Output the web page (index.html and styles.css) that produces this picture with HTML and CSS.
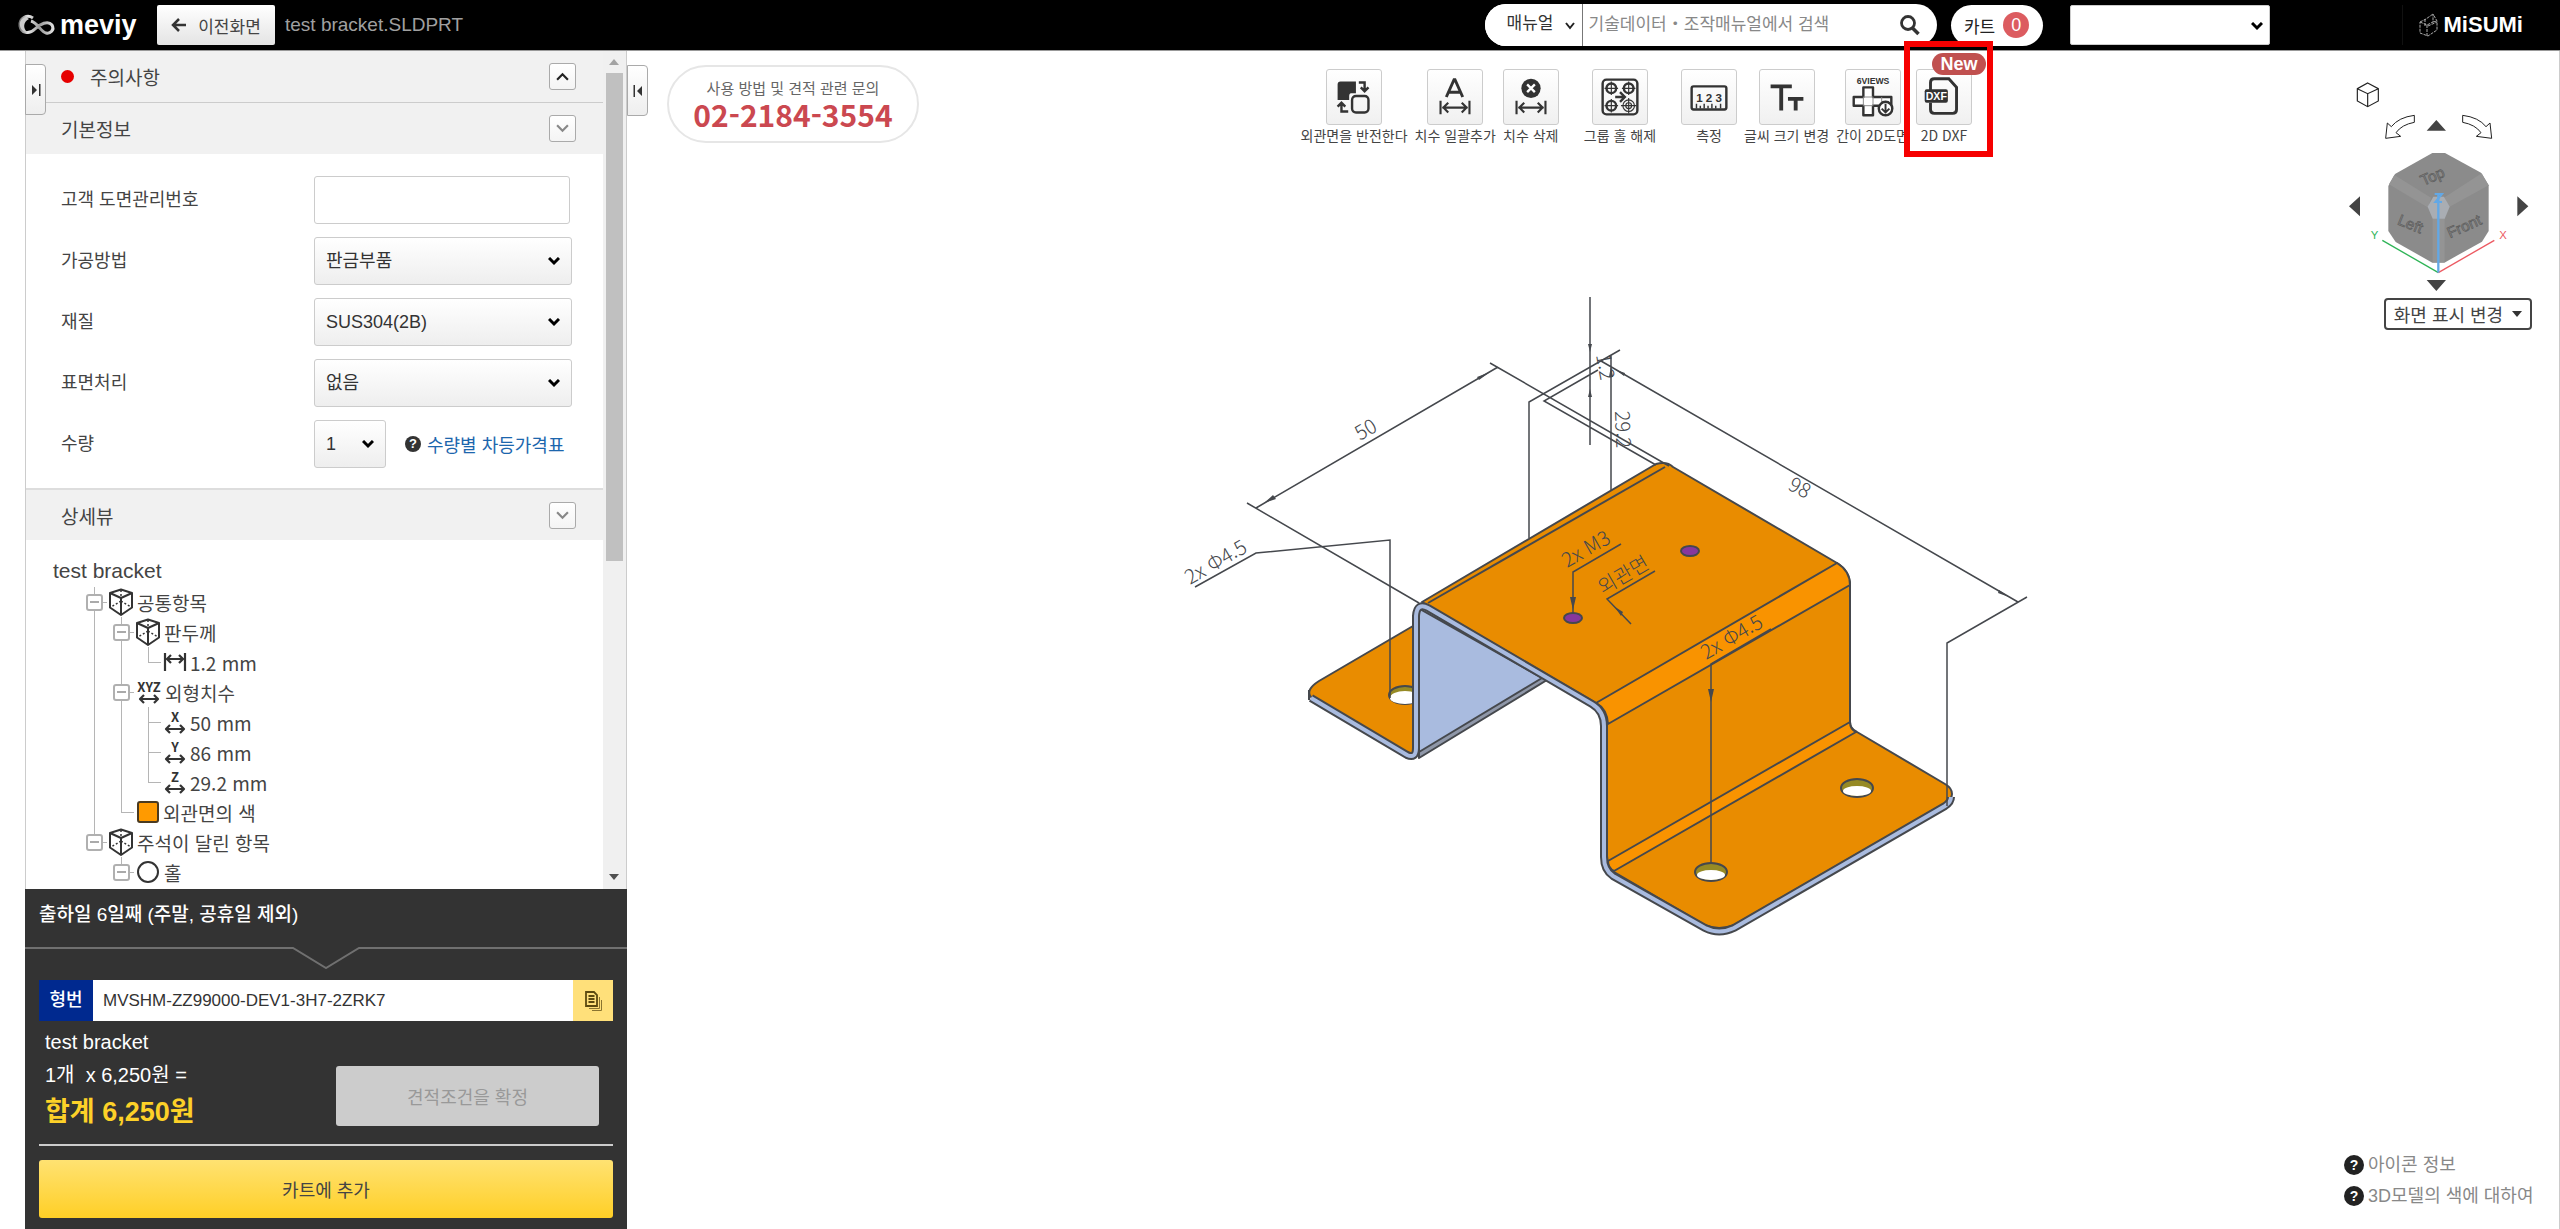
FILE: index.html
```html
<!DOCTYPE html>
<html lang="ko">
<head>
<meta charset="utf-8">
<title>meviy - test bracket.SLDPRT</title>
<link rel="stylesheet" href="styles.css">
</head>
<body>
<svg class="defs" aria-hidden="true">
  <defs>
    <symbol id="cube" viewBox="0 0 26 28">
      <path d="M13 1.500L24 5v14.500L13 27 2 19.500V5z M2 5l11 5 11-5 M13 10v17" fill="none" stroke="#333" stroke-width="2" stroke-linejoin="round"/>
      <path d="M13 2v11M13 13L3 19M13 13l10 6" fill="none" stroke="#333" stroke-width="1.500" stroke-dasharray="2 2"/>
    </symbol>
    <symbol id="span" viewBox="0 0 24 10">
      <path d="M3 5h18M7 1L3 5l4 4M17 1l4 4-4 4" fill="none" stroke="#333" stroke-width="2.200" stroke-linejoin="round"/>
    </symbol>
    <symbol id="dim" viewBox="0 0 34 16">
      <path d="M2 1v14M32 1v14M4 8h26M10 3L5 8l5 5M24 3l5 5-5 5" fill="none" stroke="#333" stroke-width="2.200"/>
    </symbol>
    <symbol id="up" viewBox="0 0 12 8"><path d="M1 7l5-5 5 5" fill="none" stroke="currentColor" stroke-width="2"/></symbol>
    <symbol id="down" viewBox="0 0 12 8"><path d="M1 1l5 5 5-5" fill="none" stroke="currentColor" stroke-width="2"/></symbol>
  </defs>
</svg>

<header class="topbar">
  <a class="logo" href="#">
    <svg width="39" height="24" viewBox="0 0 39 24" aria-hidden="true">
      <defs><linearGradient id="lg" x1="0" x2="1"><stop offset="0" stop-color="#777"/><stop offset=".25" stop-color="#e6e6e6"/><stop offset=".6" stop-color="#999"/><stop offset="1" stop-color="#ddd"/></linearGradient></defs>
      <path d="M16 5C10 1 2 5 3 13c1 7 9 9 15 3 5-5 13-9 17-4 3 5-2 9-6 8-5-1-8-10-15-12" fill="none" stroke="url(#lg)" stroke-width="3"/>
      <path d="M9 4C4 5 2 9 3 13c1 4 4 6 7 6C6 15 6 9 12 6z" fill="#ccc"/>
    </svg>
    <span>meviy</span>
  </a>
  <button class="back" type="button">
    <svg width="16" height="14" viewBox="0 0 16 14" aria-hidden="true"><path d="M8 1L2 7l6 6M2 7h13" fill="none" stroke="#333" stroke-width="2.500"/></svg>
    이전화면
  </button>
  <span class="filename">test bracket.SLDPRT</span>
  <form class="search">
    <select aria-label="검색 대상"><option>매뉴얼</option></select>
    <input type="text" aria-label="검색어" placeholder="기술데이터・조작매뉴얼에서 검색">
    <button type="button" aria-label="검색"><svg width="22" height="22" viewBox="0 0 22 22"><circle cx="9" cy="9" r="6.500" fill="none" stroke="#333" stroke-width="2.800"/><path d="M13.500 14l6 6" stroke="#333" stroke-width="3.500"/></svg></button>
  </form>
  <button class="cart" type="button">카트 <span class="count">0</span></button>
  <select class="account" aria-label="계정"><option></option></select>
  <div class="misumi">
    <svg width="20" height="24" viewBox="0 0 20 24" aria-hidden="true"><path d="M1 9l7 3 6-3V1l4 7v9l-9 6-8-3zM8 12v11M1 9l6-3 7-5M6 6v8M14 9l4-1M9 13l9-4" fill="none" stroke="#aaa" stroke-width="1" stroke-dasharray="3 1"/></svg>
    <span>MiSUMi</span>
  </div>
</header>

<main class="workspace">
  <aside class="panel">
    <button class="tab tab-left" type="button" aria-label="패널 넓히기"><svg width="10" height="12" viewBox="0 0 10 12"><path d="M1 1l5 5-5 5zM8 0h1.500v12H8z" fill="#333"/></svg></button>
    <div class="scroll">
      <div class="scroll-body">
        <section class="head head-line">
          <h2><i class="dot"></i>주의사항</h2>
          <button class="fold" type="button" aria-label="펼치기"><svg width="13" height="9"><use href="#up"/></svg></button>
        </section>
        <section class="head">
          <h2>기본정보</h2>
          <button class="fold soft" type="button" aria-label="접기"><svg width="13" height="9"><use href="#down"/></svg></button>
        </section>
        <form class="fields">
          <label for="num">고객 도면관리번호</label>
          <input id="num" type="text">
          <label for="proc">가공방법</label>
          <select id="proc"><option>판금부품</option></select>
          <label for="mat">재질</label>
          <select id="mat"><option>SUS304(2B)</option></select>
          <label for="surf">표면처리</label>
          <select id="surf"><option>없음</option></select>
          <label for="qty">수량</label>
          <div class="qty">
            <select id="qty"><option>1</option></select>
            <a href="#"><span class="help">?</span>수량별 차등가격표</a>
          </div>
        </form>
        <section class="head head-top">
          <h2>상세뷰</h2>
          <button class="fold soft" type="button" aria-label="접기"><svg width="13" height="9"><use href="#down"/></svg></button>
        </section>
        <div class="tree">
          <h3>test bracket</h3>
          <ul>
            <li>
              <div class="row"><button type="button" class="toggle" aria-label="접기"></button><svg class="ic" width="26" height="28"><use href="#cube"/></svg>공통항목</div>
              <ul>
                <li>
                  <div class="row"><button type="button" class="toggle" aria-label="접기"></button><svg class="ic" width="26" height="28"><use href="#cube"/></svg>판두께</div>
                  <ul>
                    <li><div class="row leaf"><svg class="ic" width="24" height="20" viewBox="0 0 24 20"><path d="M2 1v18M22 1v18M4 7h16M8 3L4 7l4 4M16 3l4 4-4 4" fill="none" stroke="#333" stroke-width="2.200"/></svg>1.2 mm</div></li>
                  </ul>
                </li>
                <li>
                  <div class="row"><button type="button" class="toggle" aria-label="접기"></button><span class="ic axis wide"><b>XYZ</b><svg width="24" height="10"><use href="#span"/></svg></span>외형치수</div>
                  <ul>
                    <li><div class="row leaf"><span class="ic axis"><b>X</b><svg width="24" height="10"><use href="#span"/></svg></span>50 mm</div></li>
                    <li><div class="row leaf"><span class="ic axis"><b>Y</b><svg width="24" height="10"><use href="#span"/></svg></span>86 mm</div></li>
                    <li><div class="row leaf"><span class="ic axis"><b>Z</b><svg width="24" height="10"><use href="#span"/></svg></span>29.2 mm</div></li>
                  </ul>
                </li>
                <li><div class="row leaf"><svg class="ic" width="24" height="24" viewBox="0 0 24 24"><rect x="2" y="2" width="20" height="20" rx="2" fill="#ff9a00" stroke="#4a3a20" stroke-width="2"/></svg>외관면의 색</div></li>
              </ul>
            </li>
            <li>
              <div class="row"><button type="button" class="toggle" aria-label="접기"></button><svg class="ic" width="26" height="28"><use href="#cube"/></svg>주석이 달린 항목</div>
              <ul>
                <li><div class="row"><button type="button" class="toggle" aria-label="접기"></button><svg class="ic" width="26" height="24" viewBox="0 0 26 24"><circle cx="13" cy="12" r="10" fill="#fff" stroke="#333" stroke-width="2"/></svg>홀</div></li>
              </ul>
            </li>
          </ul>
        </div>
      </div>
      <div class="bar" aria-hidden="true">
        <svg width="22" height="22" viewBox="0 0 22 22"><path d="M6 14l5-6 5 6z" fill="#a3a3a3"/></svg>
        <div class="thumb"></div>
        <svg class="bar-end" width="22" height="22" viewBox="0 0 22 22"><path d="M6 7l5 6 5-6z" fill="#505050"/></svg>
      </div>
    </div>

    <div class="quote">
      <p class="ship">출하일 6일째 (주말, 공휴일 제외)</p>
      <div class="notch"><i></i><svg width="68" height="22" viewBox="0 0 68 22" aria-hidden="true"><path d="M0 1h1l33 20L67 1h1" fill="none" stroke="#707070" stroke-width="2"/></svg><i></i></div>
      <div class="code">
        <label for="pn">형번</label>
        <input id="pn" type="text" value="MVSHM-ZZ99000-DEV1-3H7-2ZRK7">
        <button type="button" aria-label="복사"><svg width="18" height="20" viewBox="0 0 18 20"><path d="M2 1h8l3 3v11H2zM4.500 5h6M4.500 8h6M4.500 11h6" fill="none" stroke="#5c4a10" stroke-width="1.800"/><path d="M5 17.500h10.500V6M8 19.500h9.500V9" fill="none" stroke="#8a7430" stroke-width="1"/></svg></button>
      </div>
      <div class="sum">
        <div>
          <p class="name">test bracket</p>
          <p class="unit">1개&nbsp; x 6,250원 =</p>
          <p class="total">합계 6,250원</p>
        </div>
        <button class="fix" type="button" disabled>견적조건을 확정</button>
      </div>
      <button class="add" type="button">카트에 추가</button>
    </div>
  </aside>

  <section class="viewer">
    <svg class="model" width="880" height="650" viewBox="1152 290 880 650" role="img" aria-label="test bracket">
      <g class="edge">
        <path d="M1412 626L1318 681Q1304 690 1310 697L1408 754H1414z" fill="#e98c00"/>
        <ellipse cx="1404" cy="695" rx="16" ry="9" fill="#968a25"/>
        <path d="M1389 698a15 7 0 0 1 30 0a15 6 0 0 1-30 0z" fill="#fff" stroke="none"/>
        <path d="M1308 690v10" fill="none"/>
        <path d="M1417 608L1546 680L1418 758z" fill="#8f97a8"/>
        <path d="M1417 608L1541 678L1418 752z" fill="#a9bbdf"/>
        <path d="M1421 602L1655 464Q1666 461 1672 467L1836 563Q1849 571 1849 585V722Q1849 729 1856 732L1944 784Q1951 788 1951 794Q1951 799 1944 803L1733 925Q1718 931 1704 925L1613 872Q1606 866 1606 856V724Q1606 709 1595 703z" fill="#e98c00"/>
      </g>
      <g class="edge">
        <path d="M1595 703L1836 563Q1849 571 1849 585L1607 724Q1606 709 1595 703z" fill="#f99300"/>
        <path d="M1607 861L1849 722Q1849 729 1855 732L1613 871Q1607 868 1607 861z" fill="#f99300"/>
        <path d="M1427 603L1664 467" fill="none"/>
      </g>
      <path id="rim" d="M1310 698L1406 755Q1415 759 1415 748V616Q1416 602 1427 608L1591 704Q1603 711 1603 726V857Q1603 870 1612 876L1704 928Q1718 935 1733 928L1944 806Q1950 802 1950 797" fill="none" stroke="#45484d" stroke-width="8"/>
      <path d="M1310 698L1406 755Q1415 759 1415 748V616Q1416 602 1427 608L1591 704Q1603 711 1603 726V857Q1603 870 1612 876L1704 928Q1718 935 1733 928L1944 806Q1950 802 1950 797" fill="none" stroke="#a9bbdf" stroke-width="4"/>
      <g stroke="#45484d" stroke-width="2">
        <ellipse cx="1572" cy="618" rx="9" ry="5" fill="#87379c"/>
        <ellipse cx="1689" cy="551" rx="9" ry="5" fill="#87379c"/>
        <ellipse cx="1856" cy="788" rx="16" ry="9" fill="#968a25"/>
        <ellipse cx="1710" cy="872" rx="16" ry="9" fill="#968a25"/>
      </g>
      <ellipse cx="1856" cy="791" rx="14" ry="5" fill="#fff"/>
      <ellipse cx="1710" cy="875" rx="14" ry="5" fill="#fff"/>
      <g fill="none" stroke="#45484d" stroke-width="1.500">
        <path d="M1589 297V445M1255 508L1497 367M1246 503L1418 603M1489 363L1668 466M1597 370L1543 401L1655 465"/>
        <path d="M1619 350L1528 402V538M1610 355V491M1600 361L2017 602M2026 597L1946 643V806"/>
        <path d="M1194 587L1255 553L1389 540V698"/>
        <path d="M1620 544L1572 572V613M1654 571L1606 599L1630 624M1770 629L1710 664V863"/>
      </g>
      <path d="M1589 352l-2-8h4zM1589 389l-2 8h4zM1489 372l-11 8-2-3zM1263 503l9-8 3 4zM1610 366l-2 11h4zM1615 370l9 3-1 3zM2008 597l-11-4 1-3zM1572 610l-3-13h6zM1614 607l8 5-2 4zM1710 702l-3-13h6z" fill="#45484d"/>
      <g class="note">
        <text transform="translate(1189 585) rotate(-30)">2x Φ4.5</text>
        <text transform="translate(1359 441) rotate(-30)">50</text>
        <text transform="translate(1786 489) rotate(28)">98</text>
        <text transform="translate(1595 355) rotate(80)">1.2</text>
        <text transform="translate(1614 411) rotate(88)">29.2</text>
        <text transform="translate(1566 568) rotate(-30)">2x M3</text>
        <text transform="translate(1602 595) rotate(-30)">외관면</text>
        <text transform="translate(1705 660) rotate(-30)">2x Φ4.5</text>
      </g>
    </svg>

    <div class="overlay">
      <button class="tab tab-right" type="button" aria-label="패널 접기"><svg width="10" height="12" viewBox="0 0 10 12"><path d="M9 1L4 6l5 5zM.5 0H2v12H.500z" fill="#333"/></svg></button>
      <div class="contact"><span>사용 방법 및 견적 관련 문의</span><strong>02-2184-3554</strong></div>
      <nav class="tools">
        <div class="tool"><button type="button" id="t1"><svg viewBox="0 0 56 56"><path d="M14 12h16v12h-5q-2 0-2 3v4H11V15q0-3 3-3z" fill="#333"/><rect x="26" y="27" width="17" height="17" rx="4" fill="none" stroke="#333" stroke-width="2.500"/><path d="M33 13h6v7M35 18l4 4 4-4M22 43h-7v-7M11 38l4-4 4 4" fill="none" stroke="#333" stroke-width="2.500"/></svg></button><label for="t1">외관면을 반전한다</label></div>
        <div class="tool"><button type="button" id="t2"><svg viewBox="0 0 56 56"><path d="M19 28l8-18h1l8 18M22 23h11" fill="none" stroke="#333" stroke-width="3"/><svg x="11" y="31" width="34" height="16"><use href="#dim"/></svg></svg></button><label for="t2">치수 일괄추가</label></div>
        <div class="tool"><button type="button" id="t3"><svg viewBox="0 0 56 56"><circle cx="28" cy="19" r="10" fill="#333"/><path d="M24 15l8 8M32 15l-8 8" stroke="#fff" stroke-width="2.500"/><svg x="11" y="31" width="34" height="16"><use href="#dim"/></svg></svg></button><label for="t3">치수 삭제</label></div>
        <div class="tool solo"><button type="button" id="t4"><svg viewBox="0 0 56 56"><g fill="none" stroke="#333" stroke-width="2.500"><rect x="10" y="10" width="36" height="36" rx="4"/><circle cx="19" cy="19" r="5"/><circle cx="37" cy="19" r="5"/><circle cx="19" cy="37" r="5"/></g><g fill="none" stroke="#333" stroke-width="1.200"><path d="M19 12v14M12 19h14M37 12v14M30 19h14M19 30v14M12 37h14M37 29v16M29 37h16"/><circle cx="37" cy="37" r="6"/><circle cx="37" cy="37" r="3"/></g><path d="M23 28h9M28 23l5 5-5 5" fill="none" stroke="#333" stroke-width="2.500"/></svg></button><label for="t4">그룹 홀 해제</label></div>
        <div class="tool"><button type="button" id="t5"><svg viewBox="0 0 56 56"><rect x="10" y="17" width="36" height="24" rx="2" fill="none" stroke="#333" stroke-width="2.500"/><path d="M15 40v-5M19 40v-3M23 40v-5M27 40v-3M31 40v-5M35 40v-3M40 40v-5" stroke="#333" stroke-width="1.500"/><text x="28" y="33" text-anchor="middle" class="t12">1 2 3</text></svg></button><label for="t5">측정</label></div>
        <div class="tool"><button type="button" id="t6"><svg viewBox="0 0 56 56"><path d="M11 17h22M22 17v25M29 30h16M37 30v12" stroke="#333" stroke-width="4" fill="none"/></svg></button><label for="t6">글씨 크기 변경</label></div>
        <div class="tool"><button type="button" id="t7"><svg viewBox="0 0 56 56"><text x="28" y="15" text-anchor="middle" class="t9">6VIEWS</text><path d="M18 18h10v10h19v9H28v10H18V37H8v-9h10z" fill="#fff" stroke="#333" stroke-width="2.500" stroke-linejoin="round"/><path d="M18 28h10v9H18zM37 28v9" fill="none" stroke="#888"/><circle cx="41" cy="40" r="7" fill="#fff" stroke="#333" stroke-width="2.500"/><path d="M41 35v9M37 40l4 4 4-4" fill="none" stroke="#333" stroke-width="2"/></svg></button><label for="t7">간이 2D도면</label></div>
        <div class="tool framed"><button type="button" id="t8"><svg viewBox="0 0 56 56"><path d="M14 21V13q0-4 4-4h15l8 9v23q0 4-4 4H18q-4 0-4-4v-7" fill="none" stroke="#333" stroke-width="3"/><rect x="8" y="20" width="24" height="14" rx="2" fill="#333"/><text x="20" y="31" text-anchor="middle" class="t10">DXF</text></svg></button><label for="t8">2D DXF</label><span class="new">New</span></div>
      </nav>
      <div class="orient">
        <svg width="184" height="212" viewBox="144 240 552 636" role="img" aria-label="시점 큐브">
          <path d="M203 249l32 17v37l-32 17-31-17v-37zM172 266l31 15 32-15M203 281v38" fill="none" stroke="#222" stroke-width="3.500"/>
          <path d="M343 346v21q-38 7-55 31l14 11-45 6 5-46 12 11q22-28 69-34z" fill="#fff" stroke="#222" stroke-width="3"/>
          <path d="M488 346v21q38 7 55 31l-14 11 46 6-5-46-12 11q-22-28-70-34z" fill="#fff" stroke="#222" stroke-width="3"/>
          <path d="M409 360l29 32h-58zM409 873l29-33h-58zM147 619l33-30v60zM685 619l-33-30v60z" fill="#444"/>
          <path d="M397 459h38l108 59 23 38v137l-20 32-113 63h-36l-110-62-22-33V558l20-36z" fill="#8b8b8b"/>
          <path d="M283 525l110 68-8 30-118-70zM545 520l21 36-124 68-8-32zM398 655h36v132h-36z" fill="#949494"/>
          <path d="M400 590h32l17 30-15 36h-36l-15-36z" fill="#a9adb3"/>
          <path d="M415 818L247 721" stroke="#2fb457" stroke-width="4"/><path d="M415 818l168-97" stroke="#ec5a62" stroke-width="4"/><path d="M415 818V585" stroke="#62a8e6" stroke-width="7"/><path d="M404 582h22l-20 24h20" fill="none" stroke="#62a8e6" stroke-width="6"/>
          <g class="faces"><text transform="translate(370 558) rotate(-24)">Top</text><text transform="translate(290 672) rotate(22)">Left</text><text transform="translate(450 715) rotate(-24)">Front</text></g>
          <text x="212" y="718" class="ax" fill="#2fb457">Y</text><text x="598" y="718" class="ax" fill="#ec5a62">X</text>
        </svg>
        <button class="view" type="button">화면 표시 변경<svg width="10" height="6" viewBox="0 0 10 6" aria-hidden="true"><path d="M0 0h10L5 6z" fill="#333"/></svg></button>
      </div>
      <div class="links">
        <a href="#"><span class="help">?</span>아이콘 정보</a>
        <a href="#"><span class="help">?</span>3D모델의 색에 대하여</a>
      </div>
    </div>
  </section>
</main>
</body>
</html>
```

FILE: styles.css
```css
*, *::before, *::after { box-sizing: border-box; }
body {
  margin: 0;
  height: 100vh;
  display: flex;
  flex-direction: column;
  overflow: hidden;
  font-family: "Liberation Sans", "Noto Sans CJK KR", sans-serif;
  font-size: 18px;
  color: #444;
  background: #fff;
}
h2, h3, p, ul { margin: 0; padding: 0; font-weight: 400; }
ul { list-style: none; }
button, input, select { font: inherit; color: inherit; margin: 0; }
button { padding: 0; border: 0; background: none; cursor: pointer; }
a { text-decoration: none; color: inherit; }
svg { display: block; flex: none; }
.defs { position: absolute; width: 0; height: 0; }

/* top bar */
.topbar {
  flex: none;
  height: 51px;
  display: flex;
  align-items: center;
  padding: 0 37px 0 17px;
  background: #000;
  border-bottom: 1px solid #999;
}
.logo { display: flex; align-items: center; gap: 4px; width: 140px; color: #fff; font-size: 27px; font-weight: 700; }
.back {
  display: flex; align-items: center; justify-content: center; gap: 11px;
  width: 118px; height: 40px;
  font-size: 17px; color: #444;
  background: linear-gradient(#fff, #e4e4e4);
  border-radius: 2px;
}
.filename { margin-left: 10px; font-size: 19px; color: #a0a0a0; white-space: nowrap; }
.search {
  display: flex; align-items: center;
  width: 452px; height: 42px;
  margin-left: auto;
  background: #fff;
  border-radius: 21px;
  overflow: hidden;
}
.search select, .fields select, .account {
  appearance: none;
  background-repeat: no-repeat;
}
.search select {
  width: 98px; height: 42px;
  padding: 0 0 3px 22px;
  border: 0; border-right: 1px solid #777;
  font-size: 17px; color: #333;
  background-color: #fff;
  background-image: url("data:image/svg+xml,%3Csvg xmlns='http://www.w3.org/2000/svg' width='10' height='8'%3E%3Cpath d='M1 1l4 5 4-5' fill='none' stroke='%23222' stroke-width='2'/%3E%3C/svg%3E");
  background-position: 80px 18px;
}
.search input { flex: 1; min-width: 0; height: 40px; padding: 0 0 1px 6px; border: 0; outline: 0; font-size: 17px; background: none; }
.search input::placeholder { color: #888; opacity: 1; }
.search button { width: 56px; padding-left: 2px; display: flex; justify-content: center; }
.cart {
  display: flex; align-items: center; justify-content: center; gap: 8px;
  width: 92px; height: 41px; margin-left: 14px;
  border-radius: 21px; background: #fff; color: #222; font-size: 17px;
}
.count { width: 26px; height: 26px; border-radius: 50%; background: #dc5c60; color: #fff; line-height: 26px; font-size: 18px; }
.account {
  width: 200px; height: 40px; margin-left: 27px;
  border: 1px solid #ccc; border-radius: 2px;
  background-color: #fff;
  background-image: url("data:image/svg+xml,%3Csvg xmlns='http://www.w3.org/2000/svg' width='12' height='9'%3E%3Cpath d='M1 1l5 5 5-5' fill='none' stroke='%23000' stroke-width='3'/%3E%3C/svg%3E");
  background-position: 180px 16px;
}
.misumi {
  display: flex; align-items: center; gap: 5px;
  height: 40px; margin-left: 132px; padding-left: 16px;
  border-left: 1px solid #111;
  color: #fff; font-size: 22px; font-weight: 700;
}

/* two columns */
.workspace { flex: 1; min-height: 0; display: flex; padding-left: 25px; }
.panel {
  position: relative;
  flex: none; width: 602px;
  display: flex; flex-direction: column;
  border: solid #ccc; border-width: 0 1px;
}
.tab {
  position: absolute; z-index: 2;
  display: flex; align-items: center; justify-content: center;
  width: 21px; height: 51px;
  border: 1px solid #aaa;
  background: linear-gradient(#fff, #eee);
}
.tab-left { left: -1px; top: 13px; border-radius: 0 4px 4px 0; }
.tab-right { left: 0; top: 14px; border-radius: 0 4px 4px 0; }
.scroll { flex: 1; min-height: 0; display: flex; overflow: hidden; }
.scroll-body { flex: 1; overflow: hidden; }
.bar { width: 23px; display: flex; flex-direction: column; background: #f0f0f0; }
.thumb { width: 17px; height: 488px; margin-left: 3px; background: #c0c0c0; }
.bar-end { margin-top: auto; }
.head {
  display: flex; align-items: center; justify-content: space-between;
  height: 51px; padding: 0 27px 0 35px;
  background: #f1f1f1;
}
.head-line { height: 52px; border-bottom: 1px solid #ccc; }
.head-top { height: 52px; border-top: 2px solid #ddd; }
.head h2 { display: flex; align-items: center; gap: 16px; font-size: 19px; }
.dot { width: 13px; height: 13px; border-radius: 50%; background: #e60000; }
.fold {
  display: flex; align-items: center; justify-content: center;
  width: 27px; height: 27px;
  border: 1px solid #aaa; border-radius: 3px;
  background: linear-gradient(#fff, #f4f4f4); color: #222;
}
.soft { color: #888; }

.fields {
  display: grid;
  grid-template-columns: 253px 258px;
  grid-auto-rows: 48px;
  row-gap: 13px;
  align-items: center;
  padding: 22px 0 20px 35px;
}
.fields label { padding-bottom: 4px; }
.fields input, .fields select { height: 48px; border: 1px solid #ccc; border-radius: 3px; }
.fields input { width: 256px; padding: 0 12px; }
.fields select {
  width: 100%;
  padding: 0 11px 1px;
  color: #333;
  background-color: #f6f6f6;
  background-image: url("data:image/svg+xml,%3Csvg xmlns='http://www.w3.org/2000/svg' width='12' height='9'%3E%3Cpath d='M1 1l5 5 5-5' fill='none' stroke='%23000' stroke-width='3'/%3E%3C/svg%3E"), linear-gradient(#fff, #eee);
  background-repeat: no-repeat;
  background-position: right 11px center, 0 0;
}
.qty { display: flex; align-items: center; gap: 19px; white-space: nowrap; }
.qty select { width: 72px; flex: none; }
.qty a { display: flex; align-items: center; gap: 6px; color: #1c66ad; }
.help {
  flex: none;
  width: 16px; height: 16px; border-radius: 50%;
  background: #333; color: #fff;
  font-size: 13px; font-weight: 700; line-height: 16px; text-align: center;
}

/* feature tree */
.tree { padding: 14px 0 0 27px; font-size: 19px; font-family: "Noto Sans CJK KR", sans-serif; }
.tree h3 { font-family: "Liberation Sans", sans-serif; font-size: 21px; line-height: 33px; }
.tree > ul { margin-left: 33px; }
.tree ul ul { margin-left: 27px; }
.tree li { position: relative; }
.tree li::before, .tree li::after { content: ""; position: absolute; left: 8px; background: #b5b5b5; }
.tree li::before { width: 1px; top: 0; bottom: 0; }
.tree li:last-child::before { bottom: auto; height: 15px; }
.tree li::after { height: 1px; width: 13px; top: 15px; }
.row { position: relative; z-index: 1; display: flex; align-items: center; height: 30px; white-space: nowrap; }
.leaf { padding-left: 23px; }
.ic { margin-right: 3px; }
.toggle {
  flex: none; width: 17px; height: 17px; margin-right: 5px;
  border: 2px solid #b0b0b0; border-radius: 3px;
  background: linear-gradient(#aaa, #aaa) center / 9px 2px no-repeat #fff;
}
.axis { display: flex; flex-direction: column; align-items: center; width: 24px; }
.axis b { font-size: 13px; line-height: 14px; color: #333; }
.wide { margin: 0 4px 0 2px; }

/* quotation */
.quote {
  flex: none;
  margin: 0 -1px;
  display: flex; flex-direction: column;
  padding: 0 14px 11px;
  background: #333; color: #fff;
}
.ship { line-height: 52px; height: 58px; font-size: 19px; font-weight: 500; }
.notch { display: flex; margin: 0 -14px 11px; }
.notch i { flex: 1; border-top: 2px solid #707070; }
.code { display: flex; height: 41px; }
.code label { width: 54px; line-height: 40px; text-align: center; font-weight: 500; background: #00298f; }
.code input { flex: 1; min-width: 0; padding: 0 10px; border: 0; background: #fff; color: #333; font-size: 17px; }
.code button { width: 40px; display: flex; align-items: center; justify-content: center; background: #ffe07a; }
.sum {
  display: flex; justify-content: space-between; align-items: flex-start;
  height: 125px; padding: 5px 14px 0 6px; margin-bottom: 14px;
  border-bottom: 2px solid #ccc;
}
.sum p { white-space: nowrap; line-height: 33px; }
.name, .unit { font-size: 20px; }
.sum .total { font-size: 27px; line-height: 40px; font-weight: 700; color: #fdd128; }
.fix { width: 263px; height: 60px; margin-top: 40px; border-radius: 3px; background: #ccc; color: #999; }
.add { height: 58px; border-radius: 3px; background: linear-gradient(#ffe272, #ffcf26); color: #444; }

/* viewer */
.viewer { flex: 1; min-width: 0; display: grid; border-right: 1px solid #ccc; }
.model { grid-area: 1 / 1; justify-self: center; margin-top: 239px; }
.edge { stroke: #45484d; stroke-width: 2; stroke-linejoin: round; }
.note { font-family: "Noto Sans CJK KR", sans-serif; font-weight: 300; font-size: 20px; fill: #45484d; }
.overlay {
  grid-area: 1 / 1;
  position: relative;
  display: grid;
  grid-template-columns: auto 1fr auto;
  grid-template-rows: auto 1fr;
  padding: 14px 21px 19px 40px;
}
.contact {
  display: flex; flex-direction: column; align-items: center; justify-content: center;
  width: 252px; height: 78px;
  border: 2px solid #e6e6e6; border-radius: 39px;
  font-family: "Noto Sans CJK KR", sans-serif;
}
.contact span { font-size: 15px; line-height: 20px; color: #666; }
.contact strong { font-size: 30px; line-height: 32px; color: #cb4850; }
.tools { display: flex; align-items: flex-start; justify-self: end; gap: 7px; padding: 4px 376px 0 0; }
.tool { position: relative; display: flex; flex-direction: column; align-items: center; min-width: 56px; }
.tool button { width: 56px; height: 56px; border: 1px solid #ccc; border-radius: 3px; background: linear-gradient(#fff, #f0f0f0); }
.tool button > svg { width: 54px; height: 54px; }
.tool label { font-size: 14px; line-height: 20px; white-space: nowrap; font-family: "Noto Sans CJK KR", sans-serif; }
.solo { margin: 0 18px; }
.framed::after {
  content: ""; position: absolute;
  left: -12px; top: -28px; width: 89px; height: 116px;
  border: 6px solid #f60000;
}
.new {
  position: absolute; left: 16px; top: -16px;
  width: 54px; height: 22px; border-radius: 11px;
  background: #c0504f; color: #fff;
  font-size: 18px; font-weight: 700; line-height: 22px; text-align: center;
}
.t9, .t10, .t12 { font-family: "Liberation Sans", sans-serif; font-weight: 700; fill: #333; }
.t9 { font-size: 9px; }
.t10 { font-size: 11px; fill: #fff; }
.t12 { font-size: 12px; }
.orient { display: flex; flex-direction: column; width: 190px; padding-top: 15px; }
.faces { font-family: "Liberation Sans", sans-serif; font-size: 46px; fill: #868686; stroke: #5c5c5c; stroke-width: 2; }
.ax { font-family: "Liberation Sans", sans-serif; font-size: 34px; }
.view {
  display: flex; align-items: center; justify-content: center; gap: 9px;
  width: 148px; height: 32px; margin: 6px 0 0 36px;
  border: 2px solid #444; border-radius: 4px; background: #fff;
  white-space: nowrap;
}
.links {
  grid-column: 1 / -1; align-self: end; justify-self: end;
  display: flex; flex-direction: column; gap: 3px;
  width: 194px; line-height: 28px; color: #888;
}
.links a { display: flex; align-items: center; gap: 4px; white-space: nowrap; }
.links .help { width: 20px; height: 20px; line-height: 20px; font-size: 14px; background: #222; }
```
